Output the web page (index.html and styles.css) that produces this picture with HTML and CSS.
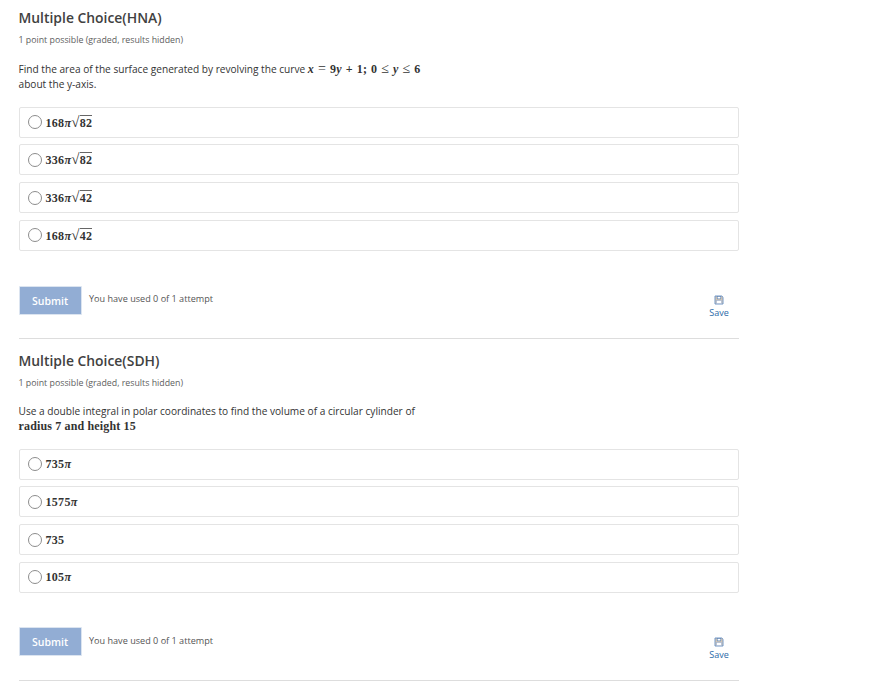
FILE: index.html
```html
<!DOCTYPE html>
<html lang="en">
<head>
<meta charset="utf-8">
<title>Multiple Choice</title>
<link rel="stylesheet" href="styles.css">
</head>
<body>
<main class="page">
  <section class="problem">
    <h3 class="title">Multiple Choice(HNA)</h3>
    <p class="meta">1 point possible (graded, results hidden)</p>
    <p class="prompt">Find the area of the surface generated by revolving the curve <span class="math eq"><i>x</i> <span class="rel">=</span> 9<i>y</i> + 1; 0 <span class="rel">≤</span> <i>y</i> <span class="rel">≤</span> 6</span><br>about the y-axis.</p>
    <div class="choices">
      <label class="choice"><span class="radio"></span><span class="math">168<i>π</i><span class="sqrt"><span class="root">√</span><span class="radicand">82</span></span></span></label>
      <label class="choice"><span class="radio"></span><span class="math">336<i>π</i><span class="sqrt"><span class="root">√</span><span class="radicand">82</span></span></span></label>
      <label class="choice"><span class="radio"></span><span class="math">336<i>π</i><span class="sqrt"><span class="root">√</span><span class="radicand">42</span></span></span></label>
      <label class="choice"><span class="radio"></span><span class="math">168<i>π</i><span class="sqrt"><span class="root">√</span><span class="radicand">42</span></span></span></label>
    </div>
    <div class="actions">
      <button class="submit" type="button">Submit</button>
      <span class="attempts">You have used 0 of 1 attempt</span>
      <a class="save">
        <svg class="save-icon" viewBox="0 0 10 10" width="10" height="10"><path d="M1 1H7.8L9 2.2V9H1Z" fill="#d9c9b5" stroke="#7398c8" stroke-width="1"/><rect x="3.2" y="1.5" width="3.6" height="2.4" fill="#fff" stroke="#5f86b8" stroke-width=".7"/><rect x="2.6" y="5.6" width="4.8" height="3" fill="#fff" stroke="#9db4d6" stroke-width=".6"/></svg>
        <span>Save</span>
      </a>
    </div>
  </section>
  <section class="problem">
    <h3 class="title">Multiple Choice(SDH)</h3>
    <p class="meta">1 point possible (graded, results hidden)</p>
    <p class="prompt">Use a double integral in polar coordinates to find the volume of a circular cylinder of<br><span class="math words">radius 7 and height 15</span></p>
    <div class="choices">
      <label class="choice"><span class="radio"></span><span class="math">735<i>π</i></span></label>
      <label class="choice"><span class="radio"></span><span class="math">1575<i>π</i></span></label>
      <label class="choice"><span class="radio"></span><span class="math">735</span></label>
      <label class="choice"><span class="radio"></span><span class="math">105<i>π</i></span></label>
    </div>
    <div class="actions">
      <button class="submit" type="button">Submit</button>
      <span class="attempts">You have used 0 of 1 attempt</span>
      <a class="save">
        <svg class="save-icon" viewBox="0 0 10 10" width="10" height="10"><path d="M1 1H7.8L9 2.2V9H1Z" fill="#d9c9b5" stroke="#7398c8" stroke-width="1"/><rect x="3.2" y="1.5" width="3.6" height="2.4" fill="#fff" stroke="#5f86b8" stroke-width=".7"/><rect x="2.6" y="5.6" width="4.8" height="3" fill="#fff" stroke="#9db4d6" stroke-width=".6"/></svg>
        <span>Save</span>
      </a>
    </div>
  </section>
</main>
</body>
</html>
```
FILE: styles.css
```css
* { box-sizing: border-box; }
html, body { margin: 0; background: #fff; }
body { font-family: "Open Sans", sans-serif; color: #414141; }
.page { width: 739px; margin-left: 0; padding: 8px 0 0 18.5px; }
.problem { height: 342px; border-bottom: 1px solid #ddd; }
.problem + .problem { padding-top: 11.5px; }
.problem:first-child { height: 331px; }
.title { margin: 0; font-size: 13.9px; line-height: 19px; font-weight: 600; color: #414141; }
.meta { margin: 7px 0 0; font-size: 8.8px; line-height: 12px; color: #5e5e5e; }
.prompt { margin: 15px 0 0; font-size: 10.15px; line-height: 15px; color: #333; }
.math { font-family: "Liberation Serif", serif; font-weight: 700; font-size: 12px; color: #333; letter-spacing: .3px; }
.math i { font-style: italic; }
.eq { word-spacing: .5px; }
.words { letter-spacing: .15px; }
.rel { font-weight: 400; font-size: 14px; }
.root { font-weight: 400; font-size: 15px; line-height: 1; }
.radicand { border-top: 1px solid #666; font-weight: 700; }
.choices { margin-top: 15.25px; display: flex; flex-direction: column; gap: 6.7px; }
.problem:first-child .choices { margin-top: 14.75px; }
.problem:first-child .actions { margin-top: 35.5px; }
.problem + .problem .attempts { margin-top: 7px; }
.problem + .problem .save { margin-top: 10px; }
.choice { display: flex; align-items: center; gap: 3.5px; height: 31px; padding-left: 8.5px; border: 1px solid #e4e4e4; border-radius: 2px; background: #fff; }
.choice .math { padding-top: 1px; }
.radio { width: 14px; height: 14px; border: 1px solid #8d8d8d; border-radius: 50%; background: #fff; flex: none; }
.actions { margin-top: 34.5px; display: flex; align-items: flex-start; }
.submit { width: 63px; height: 29px; padding: 0; border: 1px solid #dbe4f0; border-radius: 1px; background: #92add4; color: #fff; font: 600 10.5px "Open Sans", sans-serif; }
.attempts { margin-left: 7.5px; margin-top: 6px; font-size: 9.1px; line-height: 13px; color: #555; }
.save { margin-left: auto; width: 40px; margin-top: 9px; display: flex; flex-direction: column; align-items: center; font-size: 9px; line-height: 12px; color: #2b6aa8; }
.save-icon { display: block; margin-bottom: 2px; }
```
